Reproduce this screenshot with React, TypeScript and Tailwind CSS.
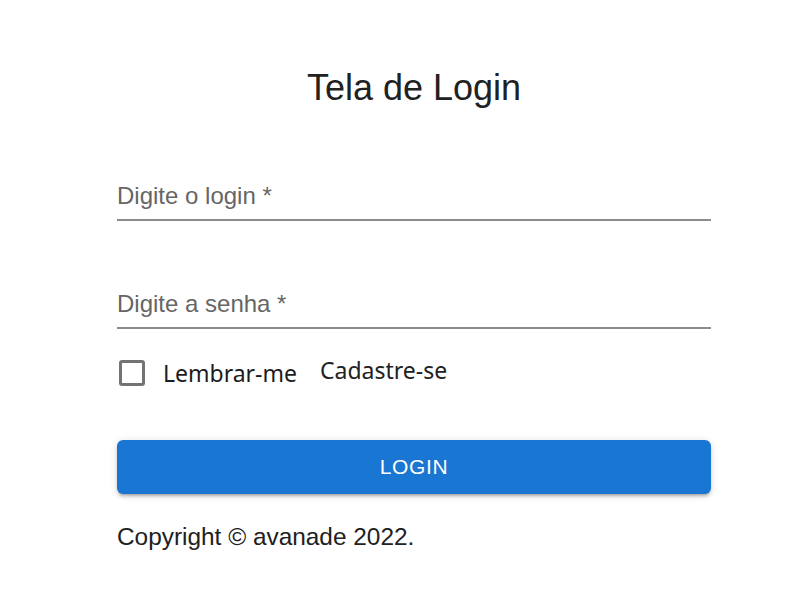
export default function App() {
  return (
    <div className="w-[790px] min-h-[595px] bg-white font-['Liberation_Sans',Arial,sans-serif]">
      <div className="ml-[117px] w-[594px] pt-[68px]">
        <h1 className="text-center text-[36px] leading-[40px] font-normal text-[#212121]">
          Tela de Login
        </h1>

        <div className="mt-[74px] border-b-2 border-[#8c8c8c] pb-[9px]">
          <label className="block text-[24px] leading-[28px] text-[#666666]">
            Digite o login *
          </label>
        </div>

        <div className="mt-[69px] border-b-2 border-[#8c8c8c] pb-[9px]">
          <label className="block text-[24px] leading-[28px] text-[#666666]">
            Digite a senha *
          </label>
        </div>

        <div className="mt-[31px] flex items-start font-['Noto_Sans',sans-serif] text-[23px]">
          <span className="ml-[2px] h-[26px] w-[26px] rounded-[3px] border-[3px] border-[#737373]" />
          <span className="ml-[18px] leading-[26px] text-[#1c1c1c]">Lembrar-me</span>
          <span className="ml-[23px] leading-[20px] text-[#222222]">Cadastre-se</span>
        </div>

        <button className="mt-[54px] flex h-[54px] w-full items-center justify-center rounded-[6px] bg-[#1976d2] text-[21px] tracking-[0.6px] text-white shadow-[0_4px_2px_-3px_rgba(0,0,0,0.2),0_3px_3px_0_rgba(0,0,0,0.14),0_1px_8px_0_rgba(0,0,0,0.12)]">
          LOGIN
        </button>

        <p className="mt-[29px] text-[24.4px] leading-[28px] text-[#212121]">
          Copyright © avanade 2022.
        </p>
      </div>
    </div>
  );
}
